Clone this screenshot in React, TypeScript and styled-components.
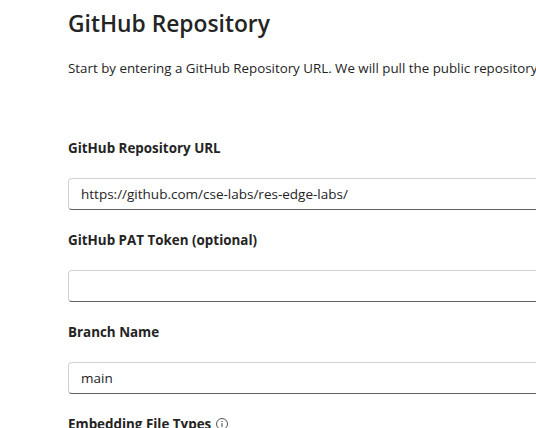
import React from 'react';
import styled, {createGlobalStyle} from 'styled-components';

const Global = createGlobalStyle`
  html, body {
    margin: 0;
    height: 100%;
    overflow: hidden;
    background: white;
  }
  body {
    font-family: "Open Sans", "Noto Sans", "Liberation Sans", sans-serif;
    color: #242424;
  }
`
const Page = styled.main`
  width: 700px;
  height: 428px;
  overflow: hidden;
  padding: 0 0 0 68px;
  box-sizing: border-box;
`
const Title = styled.h1`
  margin: 0;
  padding-top: 8px;
  font-size: 22.8px;
  line-height: 32px;
  font-weight: 600;
`
const Intro = styled.p`
  margin: 18px 0 0;
  font-size: 13.33px;
  line-height: 20px;
  white-space: nowrap;
`
const Fields = styled.div`
  display: flex;
  flex-direction: column;
  gap: 20px;
  margin-top: 60px;
`
const Field = styled.div`
  display: flex;
  flex-direction: column;
  gap: 20px;
`
const Label = styled.label`
  display: flex;
  align-items: center;
  gap: 4px;
  font-size: 13.4px;
  line-height: 20px;
  font-weight: 700;
`
const Input = styled.input`
  width: 100%;
  height: 32px;
  box-sizing: border-box;
  padding: 0 12px;
  border: 1px solid #d1d1d1;
  border-bottom-color: #616161;
  border-radius: 4px;
  outline: none;
  background: white;
  font: inherit;
  font-size: 13.5px;
  color: #242424;
`
const Info = styled.svg`
  width: 14px;
  height: 14px;
  color: #424242;
`

function InfoIcon() {
  return (
    <Info viewBox="0 0 14 14" fill="none" stroke="currentColor">
      <circle cx="7" cy="7" r="5.5" strokeWidth="0.9"/>
      <path d="M7 6.2V10" strokeWidth="1"/>
      <circle cx="7" cy="4.4" r="0.65" fill="currentColor" stroke="none"/>
    </Info>
  );
}

function App() {
  return (
    <Page>
      <Global/>
      <Title>GitHub Repository</Title>
      <Intro>Start by entering a GitHub Repository URL. We will pull the public repository</Intro>
      <Fields>
        <Field>
          <Label>GitHub Repository URL</Label>
          <Input defaultValue="https://github.com/cse-labs/res-edge-labs/"/>
        </Field>
        <Field>
          <Label>GitHub PAT Token (optional)</Label>
          <Input/>
        </Field>
        <Field>
          <Label>Branch Name</Label>
          <Input defaultValue="main"/>
        </Field>
        <Field>
          <Label>Embedding File Types <InfoIcon/></Label>
        </Field>
      </Fields>
    </Page>
  );
}
export default App
